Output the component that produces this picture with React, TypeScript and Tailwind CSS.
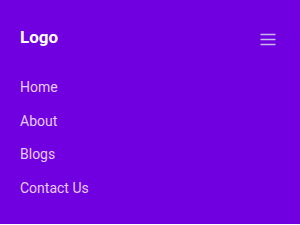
import React from "react";

const links = ["Home", "About", "Blogs", "Contact Us"];

function MenuIcon() {
  return (
    <svg width="16" height="14" viewBox="0 0 16 14" fill="none" className="text-[#c9b8ec]">
      <path d="M0.5 2.5h15M0.5 7.5h15M0.5 12.5h15" stroke="currentColor" strokeWidth="1.5" />
    </svg>
  );
}

export default function App() {
  return (
    <div className="w-[300px] h-[224px] bg-[#7000e0] px-5 font-['Roboto',sans-serif]">
      {/* top bar */}
      <div className="flex items-center justify-between h-[76px]">
        <span className="text-[17px] font-bold text-white">Logo</span>
        <span className="mr-[4px] mt-[1px]">
          <MenuIcon />
        </span>
      </div>
      <ul className="flex flex-col gap-[13.5px] mt-[1px]">
        {links.map((label) => (
          <li key={label} className="text-[14px] leading-5 text-[#e6ccf9]">
            {label}
          </li>
        ))}
      </ul>
    </div>
  );
}
